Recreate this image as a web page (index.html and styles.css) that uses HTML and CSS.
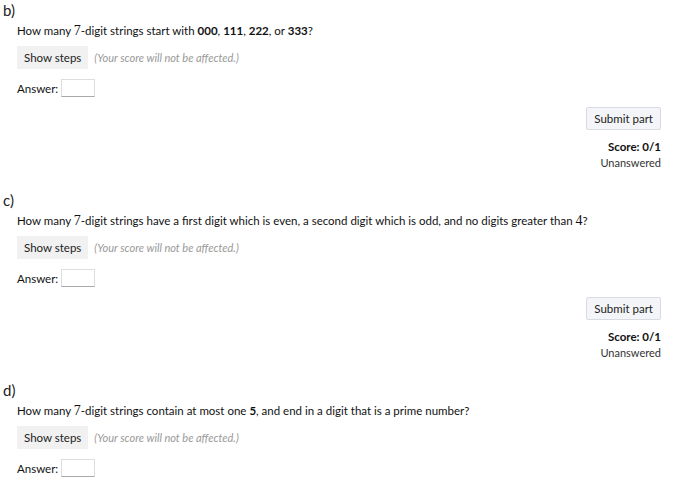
FILE: index.html
```html
<!DOCTYPE html>
<html>
<head>
<meta charset="utf-8">
<link rel="stylesheet" href="styles.css">
</head>
<body>
<main class="page">
  <section class="part">
    <div class="label">b)</div>
    <div class="body">
      <p class="q">How many <span class="m">7</span>-digit strings start with <b>000</b>, <b>111</b>, <b>222</b>, or <b>333</b>?</p>
      <div class="steps"><button class="btn-steps">Show steps</button><span class="note">(Your score will not be affected.)</span></div>
      <div class="answer"><span>Answer:</span><input class="ans" type="text"></div>
      <div class="submit-row"><button class="btn-submit">Submit part</button></div>
      <div class="score"><div class="score-val">Score: 0/1</div><div class="status">Unanswered</div></div>
    </div>
  </section>
  <section class="part">
    <div class="label">c)</div>
    <div class="body">
      <p class="q">How many <span class="m">7</span>-digit strings have a first digit which is even, a second digit which is odd, and no digits greater than <span class="m">4</span>?</p>
      <div class="steps"><button class="btn-steps">Show steps</button><span class="note">(Your score will not be affected.)</span></div>
      <div class="answer"><span>Answer:</span><input class="ans" type="text"></div>
      <div class="submit-row"><button class="btn-submit">Submit part</button></div>
      <div class="score"><div class="score-val">Score: 0/1</div><div class="status">Unanswered</div></div>
    </div>
  </section>
  <section class="part last">
    <div class="label">d)</div>
    <div class="body">
      <p class="q">How many <span class="m">7</span>-digit strings contain at most one <b>5</b>, and end in a digit that is a prime number?</p>
      <div class="steps"><button class="btn-steps">Show steps</button><span class="note">(Your score will not be affected.)</span></div>
      <div class="answer"><span>Answer:</span><input class="ans" type="text"></div>
    </div>
  </section>
</main>
</body>
</html>
```
FILE: styles.css
```css
html, body {
  margin: 0;
  padding: 0;
  background: #fff;
  overflow: hidden;
}
body {
  font-family: Lato, "Open Sans", sans-serif;
  font-size: 11.5px;
  color: #111;
}
.page {
  padding: 0 39px 0 3px;
}
.part {
  display: flex;
  flex-direction: column;
  height: 190px;
}
.part.last {
  height: auto;
}
.label {
  font-size: 15px;
  line-height: 20px;
  height: 20px;
  color: #222;
}
.body {
  padding-left: 14px;
  display: flex;
  flex-direction: column;
}
.q {
  margin: 0;
  line-height: 22px;
  height: 22px;
  white-space: nowrap;
}
.q b {
  font-weight: 700;
}
.m {
  font-family: "Liberation Serif", serif;
  font-size: 14px;
}
.steps {
  margin-top: 4px;
  display: flex;
  align-items: center;
  gap: 6px;
}
.btn-steps {
  font: inherit;
  height: 23px;
  padding: 0 7px;
  border: none;
  background: #f1f1f1;
  color: #222;
}
.note {
  font-style: italic;
  font-size: 11px;
  color: #999;
}
.answer {
  margin-top: 10px;
  display: flex;
  align-items: center;
  gap: 3px;
  height: 18px;
}
.ans {
  width: 34px;
  height: 18px;
  box-sizing: border-box;
  border: 1px solid #ddd;
  border-bottom-color: #aaa;
  padding: 0;
  margin: 0;
}
.submit-row {
  margin-top: 10px;
  display: flex;
  justify-content: flex-end;
}
.btn-submit {
  font: inherit;
  height: 23px;
  padding: 0 7px;
  border: 1px solid #d8dce2;
  border-radius: 2px;
  background: #f3f5f8;
  color: #222;
}
.score {
  margin-top: 9px;
  display: flex;
  flex-direction: column;
  align-items: flex-end;
}
.score-val {
  font-weight: 700;
  line-height: 16px;
}
.status {
  font-size: 11px;
  line-height: 16px;
  color: #333;
}
```
